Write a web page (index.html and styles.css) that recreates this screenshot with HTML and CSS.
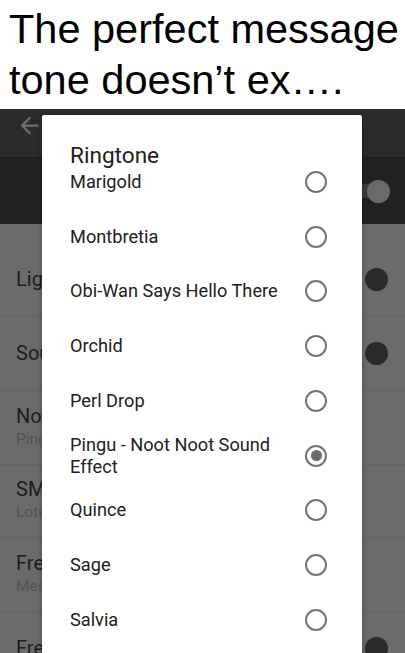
FILE: index.html
```html
<!DOCTYPE html>
<html>
<head>
<meta charset="utf-8">
<link rel="stylesheet" href="styles.css">
</head>
<body>
<div class="caption">The perfect message<br>tone doesn’t ex….</div>
<div class="screen">
  <div class="appbar">
    <svg class="back" viewBox="0 0 24 24" width="27" height="27"><path d="M20 11H7.83l5.59-5.59L12 4l-8 8 8 8 1.41-1.41L7.83 13H20v-2z" fill="#6f6f6f"/></svg>
  </div>
  <div class="switchbar">
    <span class="switch"><span class="track"></span><span class="thumb thumb-light"></span></span>
  </div>
  <div class="settings">
    <div class="row row-single"><span class="row-title">Light up screen</span><span class="thumb thumb-dark"></span></div>
    <div class="row row-single"><span class="row-title">Sound</span><span class="thumb thumb-dark"></span></div>
    <div class="row row-double"><div class="row-text"><span class="row-title">Notification sound</span><span class="row-sub">Pingu - Noot Noot</span></div></div>
    <div class="row row-double"><div class="row-text"><span class="row-title">SMS sound</span><span class="row-sub">Lotus</span></div></div>
    <div class="row row-double"><div class="row-text"><span class="row-title">Frequency</span><span class="row-sub">Message sound</span></div></div>
    <div class="row row-single"><span class="row-title">Frequent alerts</span><span class="thumb thumb-dark"></span></div>
  </div>
  <div class="dialog">
    <div class="dialog-title">Ringtone</div>
    <div class="viewport">
      <div class="list">
        <div class="item"><span class="label">Marigold</span><span class="radio"></span></div>
        <div class="item"><span class="label">Montbretia</span><span class="radio"></span></div>
        <div class="item"><span class="label">Obi-Wan Says Hello There</span><span class="radio"></span></div>
        <div class="item"><span class="label">Orchid</span><span class="radio"></span></div>
        <div class="item"><span class="label">Perl Drop</span><span class="radio"></span></div>
        <div class="item"><span class="label">Pingu - Noot Noot Sound Effect</span><span class="radio checked"></span></div>
        <div class="item"><span class="label">Quince</span><span class="radio"></span></div>
        <div class="item"><span class="label">Sage</span><span class="radio"></span></div>
        <div class="item"><span class="label">Salvia</span><span class="radio"></span></div>
        <div class="item"><span class="label">Tulip</span><span class="radio"></span></div>
      </div>
    </div>
  </div>
</div>
</body>
</html>
```
FILE: styles.css
```css
html, body {
  margin: 0;
  padding: 0;
}
body {
  width: 405px;
  height: 653px;
  overflow: hidden;
  background: #ffffff;
}
.caption {
  box-sizing: border-box;
  height: 109px;
  padding: 3px 0 0 9px;
  font-family: "Liberation Sans", Arial, sans-serif;
  font-size: 41.5px;
  line-height: 51px;
  color: #000;
  white-space: nowrap;
}
.screen {
  position: relative;
  height: 544px;
  overflow: hidden;
  background: #6b6b6b;
  display: flex;
  flex-direction: column;
  font-family: Roboto, "Noto Sans", sans-serif;
}
.appbar {
  flex: none;
  height: 48px;
  background: #2b2b2b;
  display: flex;
  align-items: flex-start;
  padding: 2.5px 0 0 15.5px;
  box-sizing: border-box;
}
.back {
  display: block;
}
.switchbar {
  flex: none;
  height: 67px;
  background: #212121;
  border-top: 1px solid #1c1c1c;
  box-sizing: border-box;
  display: flex;
  align-items: center;
  justify-content: flex-end;
  padding: 0 15.5px 0 0;
}
.switch {
  position: relative;
  display: flex;
  align-items: center;
  justify-content: flex-end;
  width: 40px;
  height: 23px;
}
.track {
  position: absolute;
  right: 6px;
  top: 4.5px;
  width: 34px;
  height: 14px;
  border-radius: 7px;
  background: #3c3c3c;
}
.thumb {
  position: relative;
  display: block;
  width: 23px;
  height: 23px;
  border-radius: 50%;
  flex: none;
}
.thumb-light {
  background: #6a6a6a;
}
.thumb-dark {
  background: #2a2a2a;
}
.settings {
  flex: 1;
  padding-top: 19px;
}
.row {
  box-sizing: border-box;
  display: flex;
  align-items: center;
  justify-content: space-between;
  padding: 0 17.5px 0 16px;
  border-bottom: 1px solid #646464;
}
.row-single {
  height: 74px;
}
.row-double {
  height: 73.5px;
}
.row-text {
  display: flex;
  flex-direction: column;
}
.row-title {
  font-size: 20px;
  line-height: 23px;
  color: #1c1c1c;
}
.row-sub {
  font-size: 15.5px;
  line-height: 22px;
  color: #555555;
}
.dialog {
  position: absolute;
  left: 42px;
  top: 6px;
  width: 320px;
  bottom: -30px;
  background: #ffffff;
  border-radius: 2px;
  box-shadow: 0 1px 5px rgba(0, 0, 0, 0.35);
  display: flex;
  flex-direction: column;
}
.dialog-title {
  flex: none;
  padding: 27.5px 28px 0;
  font-size: 22.6px;
  line-height: 26px;
  color: #212121;
}
.viewport {
  flex: 1;
  overflow: hidden;
}
.list {
  margin-top: -14px;
}
.item {
  box-sizing: border-box;
  height: 54.75px;
  display: flex;
  align-items: center;
  gap: 14px;
  padding: 0 35px 0 28px;
}
.label {
  flex: 1;
  font-size: 18.2px;
  line-height: 22px;
  color: #212121;
}
.radio {
  flex: none;
  box-sizing: border-box;
  width: 22px;
  height: 22px;
  border: 2px solid #737373;
  border-radius: 50%;
  display: flex;
  align-items: center;
  justify-content: center;
}
.radio.checked::after {
  content: "";
  width: 11px;
  height: 11px;
  border-radius: 50%;
  background: #6a6a6a;
}
```
